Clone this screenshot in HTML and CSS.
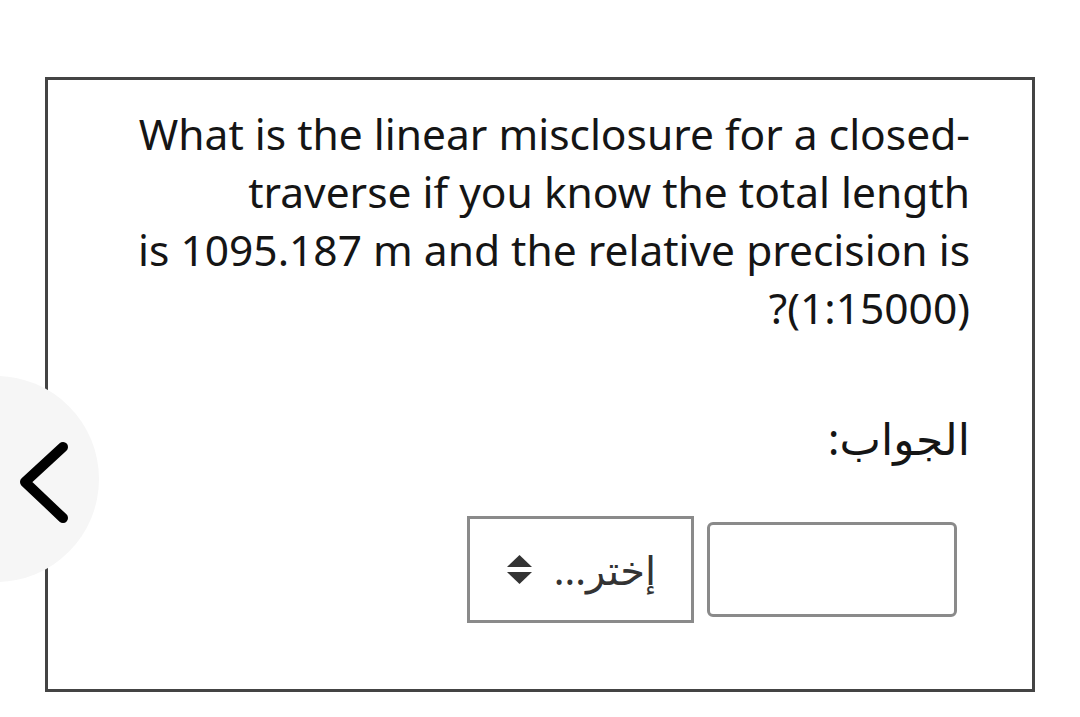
FILE: index.html
```html
<!DOCTYPE html>
<html lang="ar" dir="rtl">
<head>
<meta charset="utf-8">
<link rel="stylesheet" href="styles.css">
</head>
<body>
<div class="page">
  <div class="card">
    <div class="question"><span dir="ltr">What is the linear misclosure for a closed-</span><br>traverse if you know the total length<br>is 1095.187 m and the relative precision is<br>(1:15000)?</div>
    <div class="answer-label">الجواب:</div>
    <div class="answer-row">
      <div class="text-input"></div>
      <div class="select">
        <span class="select-text">إختر...</span>
        <svg class="select-arrows" width="27" height="31" viewBox="0 0 27 31"><path d="M13.5 1 L26 13 L1 13 Z" fill="#333"/><path d="M1 18 L26 18 L13.5 30 Z" fill="#333"/></svg>
      </div>
    </div>
  </div>
  <div class="nav-btn">
    <svg width="60" height="90" viewBox="0 0 60 90"><path d="M44 13 L6 48 L44 84" fill="none" stroke="#000" stroke-width="10" stroke-linecap="round" stroke-linejoin="round"/></svg>
  </div>
</div>
</body>
</html>
```
FILE: styles.css
```css
html, body {
  margin: 0;
  padding: 0;
  background: #fff;
}
body {
  font-family: "Noto Sans", "DejaVu Sans", sans-serif;
  color: #151515;
}
.page {
  position: relative;
  width: 1080px;
  height: 717px;
  overflow: hidden;
  padding-top: 77px;
  box-sizing: border-box;
}
.card {
  margin-right: 45px;
  width: 990px;
  height: 615px;
  box-sizing: border-box;
  border: 3px solid #444;
  padding: 25px 62px 0 40px;
  direction: rtl;
}
.question {
  font-size: 42.5px;
  line-height: 58px;
  text-align: right;
  direction: rtl;
  white-space: nowrap;
}
.answer-label {
  margin-top: 72px;
  font-size: 44px;
  line-height: 58px;
}
.answer-row {
  margin-top: 49px;
  display: flex;
  align-items: center;
  gap: 13px;
  padding-right: 13px;
}
.text-input {
  width: 250px;
  height: 95px;
  box-sizing: border-box;
  border: 3px solid #8a8a8a;
  border-radius: 6px;
}
.select {
  width: 227px;
  height: 107px;
  box-sizing: border-box;
  border: 3px solid #8a8a8a;
  display: flex;
  align-items: center;
  padding-right: 35px;
  gap: 21px;
}
.select-text {
  font-size: 40px;
  color: #333;
}
.select-arrows {
  display: block;
}
.nav-btn {
  position: absolute;
  left: -107px;
  top: 376px;
  width: 206px;
  height: 206px;
  border-radius: 50%;
  background: #f6f6f6;
  display: flex;
  align-items: center;
  justify-content: flex-end;
  padding-right: 20px;
  box-sizing: border-box;
  direction: ltr;
}
.nav-btn svg {
  display: block;
}
```
